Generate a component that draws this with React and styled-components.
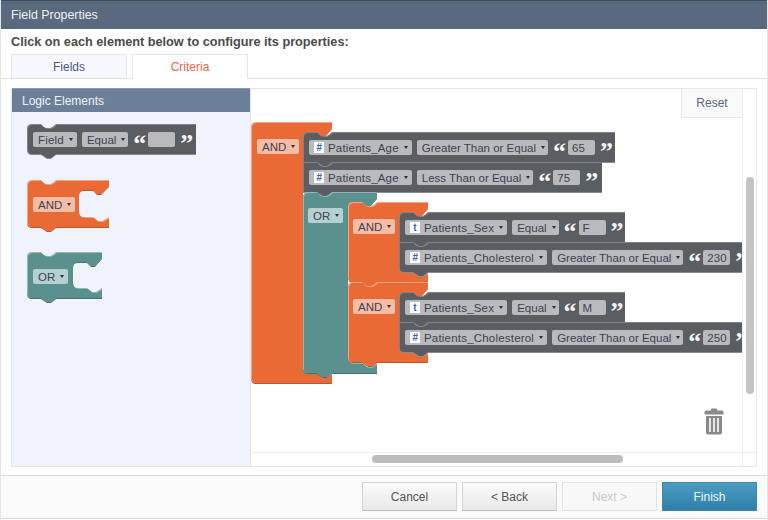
import React, { useId } from "react";
import styled, { createGlobalStyle } from "styled-components";

const Global = createGlobalStyle`
  html, body { margin: 0; padding: 0; background: #fff; }
  body { font-family: "Liberation Sans", Arial, sans-serif; font-size: 12px; }
`;

const Page = styled.div`
  width: 768px; height: 520px; display: flex; flex-direction: column;
  box-sizing: border-box; overflow: hidden; background: #fff; padding-bottom: 1px;
  border-left: 1px solid #e4e4e4; border-right: 1px solid #e4e4e4;
`;
const TitleBar = styled.div`
  height: 28px; flex: none; display: flex; align-items: center; padding-left: 10px;
  background: #5a6a7e; border-top: 1px solid #3f4c5e; color: #eef1f4; font-size: 12.4px;
`;
const Instruction = styled.div`
  height: 25px; flex: none; display: flex; align-items: center; padding-left: 10px;
  font-weight: bold; color: #4a4a4a; font-size: 12.7px;
`;
const Tabs = styled.div`
  height: 25px; flex: none; box-sizing: border-box; display: flex; gap: 5px; padding-left: 10px;
  border-bottom: 1px solid #e2e2e2;
`;
const Tab = styled.div`
  width: 116px; height: 25px; box-sizing: border-box; display: flex; align-items: center; justify-content: center;
  border: 1px solid #e6e6e6; border-bottom: ${p => (p.$active ? "none" : "1px solid #e2e2e2")};
  background: ${p => (p.$active ? "#fff" : "#f7f8fe")};
  color: ${p => (p.$active ? "#f0654a" : "#4a5590")}; font-size: 12px;
`;
const Body = styled.div`
  flex: 1; min-height: 0; padding: 9px 10px 8px; display: flex;
`;
const Panel = styled.div`
  flex: 1; display: flex; border: 1px solid #e6e6e6; border-left: 0; border-top: 0; box-sizing: border-box;
`;
const Sidebar = styled.div`
  width: 239px; flex: none; display: flex; flex-direction: column; background: #f0f3fc;
  border-left: 1px solid #e3e6ee; box-sizing: border-box;
`;
const SidebarHead = styled.div`
  height: 24px; flex: none; display: flex; align-items: center; padding-left: 10px;
  background: #6b7f99; border-top: 1px solid #8d9bb0; box-sizing: border-box; color: #f0f3f7; font-size: 12px;
`;
const Palette = styled.div`
  flex: 1; display: flex; flex-direction: column; align-items: flex-start; gap: 25px; padding: 12px 0 0 15px;
`;
const Work = styled.div`
  flex: 1; min-width: 0; display: grid; grid-template-columns: 1fr 14px; grid-template-rows: 1fr 14px;
  border-top: 1px solid #e6e6e6; border-left: 1px solid #e6e6e6;
`;
const Canvas = styled.div`
  position: relative; overflow: hidden; background: #fff;
`;
const Placed = styled.div`
  position: absolute; left: 0; top: 33px;
`;
const Reset = styled.div`
  position: absolute; right: 0; top: 0; width: 60px; height: 28px; display: flex; align-items: center; justify-content: center;
  background: #f9f9f9; border-left: 1px solid #e8e8e8; border-bottom: 1px solid #e8e8e8; color: #5a6488; font-size: 12px;
`;
const Trash = styled.svg`
  position: absolute; left: 453px; top: 319px;
`;
const VTrack = styled.div`
  background: #fff; border-left: 1px solid #eeeeee; padding: 88px 2px 58px 2px; display: flex; justify-content: center;
`;
const VThumb = styled.div`
  width: 8px; flex: none; background: #c4c4c4; border-radius: 4px;
`;
const HTrack = styled.div`
  background: #fff; border-top: 1px solid #eeeeee; padding: 2px 0 3px 121px; display: flex;
`;
const HThumb = styled.div`
  width: 251px; height: 8px; background: #bdbdbd; border-radius: 4px;
`;
const Corner = styled.div`
  background: #fff; border-left: 1px solid #eeeeee; border-top: 1px solid #eeeeee;
`;
const Footer = styled.div`
  flex: none; height: 44px; box-sizing: border-box; display: flex; justify-content: flex-end; gap: 5px;
  padding: 6px 10px 0 0; background: #fafafa; border-top: 1px solid #dcdcdc; border-bottom: 1px solid #d8d8d8;
`;
const Button = styled.div`
  width: 95px; height: 29px; box-sizing: border-box; display: flex; align-items: center; justify-content: center; font-size: 12px;
  ${p => p.$primary
    ? "background: linear-gradient(#4c9dc2, #2f7fa8); border: 1px solid #3a86ad; color: #eef6fa;"
    : p.$disabled
    ? "background: #f8f8f8; border: 1px solid #e2e2e2; color: #c8c8c8;"
    : "background: linear-gradient(#fbfbfb, #e8e8e8); border: 1px solid #d4d4d4; border-bottom-color: #bdbdbd; color: #555;"}
`;

/* Blocks */
const Blk = styled.div`
  position: relative; display: grid; grid-template-columns: ${p => p.$head}px max-content;
  width: ${p => p.$w}px; height: ${p => p.$h}px; box-sizing: border-box; padding-top: 10px;
`;
const Head = styled.div`
  position: relative; padding: ${p => p.$top}px 0 0 ${p => p.$left}px;
`;
const Stack = styled.div`
  position: relative; display: flex; flex-direction: column; align-items: flex-start;
`;
const Shape = styled.svg`
  position: absolute; left: 0; top: 0; overflow: visible; display: block;
`;
const RowBox = styled.div`
  position: relative; width: ${p => p.$w}px; height: 30px; box-sizing: border-box; flex: none;
  margin-bottom: ${p => p.$mb || 0}px;
`;
const RowItems = styled.div`
  position: relative; display: flex; align-items: center; gap: 5px; height: 30px; box-sizing: border-box;
  padding: 1px 0 0 6px; width: max-content;
`;
const Chip = styled.div`
  position: relative; height: 15px; box-sizing: border-box; display: inline-flex; align-items: center; gap: 4px;
  padding: 0 ${p => (p.$tight ? 2 : 3)}px 0 5px; border-radius: 2px; background: ${p => p.$bg || "#b8babd"};
  color: #3e3f52; font-size: 11.5px; white-space: nowrap;
`;
const Name = styled.span`
  letter-spacing: 0.2px;
`;
const Caret = styled.span`
  width: 0; height: 0; flex: none; margin: 0 1px 0 1px; border-left: 2.5px solid transparent; border-right: 2.5px solid transparent;
  border-top: 3px solid #2f2f3a;
`;
const TypeIcon = styled.span`
  width: 10px; height: 11px; flex: none; display: flex; align-items: center; justify-content: center; background: #fff;
  color: #2d62c8; font-size: 10px; font-weight: bold; font-style: ${p => (p.$italic ? "italic" : "normal")};
  line-height: 11px;
`;
const Quote = styled.span`
  width: 10px; height: 15px; flex: none; overflow: visible; color: #f4f4f4; font-family: "Liberation Serif", serif;
  font-weight: bold; font-size: 26px; line-height: 24px; text-align: center; display: block;
`;
const Field = styled.div`
  width: 27px; height: 15px; box-sizing: border-box; padding-left: 4px; display: flex; align-items: center;
  border-radius: 2px; background: #b8babd; color: #3e3f52; font-size: 11.5px;
`;

const COLORS = {
  orange: { main: "#ea6a36", light: "#f3a686", dark: "#b6562f", chip: "#f6bda6" },
  teal: { main: "#5a918f", light: "#92b8b6", dark: "#46706f", chip: "#b5d1cf" },
  grey: { main: "#5a5e63", light: "#7f8387", dark: "#8a8d90" },
};

function topEdge(nx, notch) {
  return notch ? `H${nx} Q${nx + 3},4 ${nx + 6},4 H${nx + 9} Q${nx + 12},3 ${nx + 15},0` : "";
}
function bottomEdge(nx, y, notch) {
  return notch ? `H${nx + 15} L${nx + 10},${y + 4} H${nx + 6} L${nx},${y}` : "";
}
function cPath({ w, h, head, notch = true, radius = 5 }) {
  const t = head + 14;
  return [
    `M${radius},0`,
    topEdge(14, notch),
    `H${w} V6 L${t + 8},14 Q${t + 5},14 ${t + 4},14 L${t},10 H${head + 5} Q${head},10 ${head},15`,
    `V${h - 15} Q${head},${h - 10} ${head + 5},${h - 10} H${t} L${t + 5},${h - 6} H${t + 9} L${w},${h - 10}`,
    `V${h}`,
    bottomEdge(14, h, notch),
    `H${radius} Q0,${h} 0,${h - radius} V${radius} Q0,0 ${radius},0 Z`,
  ].join(" ");
}
function rowPath({ w, first, last }) {
  const h = 30;
  const r = 5;
  return [
    first ? `M${r},0` : "M0,0",
    topEdge(14, true),
    `H${w} V${h}`,
    bottomEdge(14, h, true),
    last ? `H${r} Q0,${h} 0,${h - r}` : `H0`,
    first ? `V${r} Q0,0 ${r},0 Z` : "Z",
  ].join(" ");
}

function BlockShape({ d, w, h, tone }) {
  const id = "c" + useId().replace(/[^a-zA-Z0-9]/g, "");
  const c = COLORS[tone];
  return (
    <Shape width={w} height={h} viewBox={`0 0 ${w} ${h}`} aria-hidden="true">
      <defs>
        <clipPath id={id}>
          <path d={d} />
        </clipPath>
      </defs>
      <path d={d} fill={c.dark} transform="translate(0,1)" />
      <path d={d} fill={c.light} />
      <g clipPath={`url(#${id})`}>
        <path d={d} fill={c.main} transform="translate(1,1)" />
      </g>
    </Shape>
  );
}

function LogicBlock({ tone, label, w, h, head, chipTop = 7, chipLeft = 6, notch = true, children }) {
  return (
    <Blk $w={w} $h={h} $head={head}>
      <BlockShape d={cPath({ w, h, head, notch })} w={w} h={h} tone={tone} />
      <Head $top={chipTop} $left={chipLeft}>
        <Chip $bg={COLORS[tone].chip}>
          {label}
          <Caret />
        </Chip>
      </Head>
      <Stack>{children}</Stack>
    </Blk>
  );
}

function Row({ w, first, last, type, name, op, value, mb }) {
  return (
    <RowBox $w={w} $mb={mb}>
      <BlockShape d={rowPath({ w, first, last })} w={w} h={30} tone="grey" />
      <RowItems>
        <Chip>
          {type && <TypeIcon $italic={type === "#"}>{type}</TypeIcon>}
          <Name>{name}</Name>
          <Caret />
        </Chip>
        <Chip $tight>
          {op}
          <Caret />
        </Chip>
        <Quote>“</Quote>
        <Field>{value}</Field>
        <Quote>”</Quote>
      </RowItems>
    </RowBox>
  );
}

const TrashIcon = () => (
  <Trash width="20" height="27" viewBox="0 0 20 27" aria-hidden="true">
    <path d="M7 1.5 Q7 0.5 8 0.5 H12 Q13 0.5 13 1.5 V2.5 H18 Q19.5 2.5 19.5 4 V6.5 H0.5 V4 Q0.5 2.5 2 2.5 H7 Z" fill="#8a8a8a" />
    <path d="M2 8 H18 V24.5 Q18 26.5 16 26.5 H4 Q2 26.5 2 24.5 Z" fill="#8a8a8a" />
    <rect x="5" y="10" width="2" height="14" fill="#e6e6e6" />
    <rect x="9" y="10" width="2" height="14" fill="#e6e6e6" />
    <rect x="13" y="10" width="2" height="14" fill="#e6e6e6" />
  </Trash>
);

const GTE = "Greater Than or Equal";

export default function App() {
  return (
    <Page>
      <Global />
      <TitleBar>Field Properties</TitleBar>
      <Instruction>Click on each element below to configure its properties:</Instruction>
      <Tabs>
        <Tab>Fields</Tab>
        <Tab $active>Criteria</Tab>
      </Tabs>
      <Body>
        <Panel>
          <Sidebar>
            <SidebarHead>Logic Elements</SidebarHead>
            <Palette>
              <Row w={169} first last name="Field" op="Equal" value="" mb={1} />
              <LogicBlock tone="orange" label="AND" w={82} h={47} head={52} />
              <LogicBlock tone="teal" label="OR" w={75} h={46} head={46} />
            </Palette>
          </Sidebar>
          <Work>
            <Canvas>
              <Placed>
                <LogicBlock tone="orange" label="AND" w={81} h={261} head={52} notch={false}>
                  <Row w={312} first type="#" name="Patients_Age" op={GTE} value="65" />
                  <Row w={299} type="#" name="Patients_Age" op="Less Than or Equal" value="75" />
                  <LogicBlock tone="teal" label="OR" w={74} h={181} head={45} chipTop={6} chipLeft={5}>
                    <LogicBlock tone="orange" label="AND" w={80} h={80} head={51} chipTop={7} chipLeft={5}>
                      <Row w={226} first type="t" name="Patients_Sex" op="Equal" value="F" />
                      <Row w={360} last type="#" name="Patients_Cholesterol" op={GTE} value="230" />
                    </LogicBlock>
                    <LogicBlock tone="orange" label="AND" w={80} h={80} head={51} chipTop={7} chipLeft={5}>
                      <Row w={226} first type="t" name="Patients_Sex" op="Equal" value="M" />
                      <Row w={360} last type="#" name="Patients_Cholesterol" op={GTE} value="250" />
                    </LogicBlock>
                  </LogicBlock>
                </LogicBlock>
              </Placed>
              <Reset>Reset</Reset>
              <TrashIcon />
            </Canvas>
            <VTrack>
              <VThumb />
            </VTrack>
            <HTrack>
              <HThumb />
            </HTrack>
            <Corner />
          </Work>
        </Panel>
      </Body>
      <Footer>
        <Button>Cancel</Button>
        <Button>&lt; Back</Button>
        <Button $disabled>Next &gt;</Button>
        <Button $primary>Finish</Button>
      </Footer>
    </Page>
  );
}
